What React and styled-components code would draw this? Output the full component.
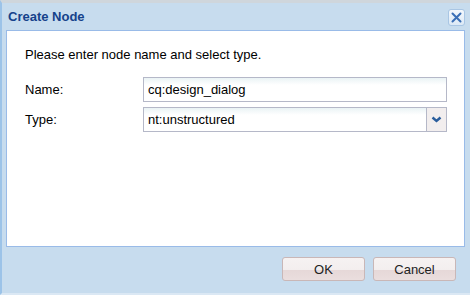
import styled, { createGlobalStyle } from 'styled-components';

const Global = createGlobalStyle`
  html, body { margin: 0; padding: 0; }
  body {
    font-family: "Liberation Sans", Arial, sans-serif;
    font-size: 13px;
    background: #fff;
  }
`;

const Window = styled.div`
  width: 470px;
  height: 295px;
  box-sizing: border-box;
  background: #c7dcee;
  border-top: 3px solid #cfd6dc;
  border-left: 2px solid #9cc3e8;
  border-bottom: 2px solid #dbe8f4;
  display: flex;
  flex-direction: column;
`;

const TitleBar = styled.div`
  height: 27px;
  display: flex;
  align-items: center;
  justify-content: space-between;
  padding: 0 5px 0 6px;
`;

const Title = styled.span`
  font-weight: bold;
  font-size: 13px;
  color: #15428b;
  margin-top: -1px;
`;

const CloseButton = styled.button`
  width: 17px;
  height: 17px;
  padding: 0;
  border: 1px solid #a9c6e4;
  border-radius: 3px;
  background: linear-gradient(#f4f8fc, #dce9f6);
  display: flex;
  align-items: center;
  justify-content: center;
  margin-top: 2px;
`;

const Body = styled.div`
  margin: 0 5px 0 4px;
  height: 217px;
  box-sizing: border-box;
  background: #fff;
  border: 1px solid #99bbe8;
  padding: 16px 17px 0 18px;
`;

const Intro = styled.p`
  margin: 0 0 15px;
  color: #000;
`;

const Row = styled.div`
  display: flex;
  align-items: center;
  margin-bottom: 5px;
`;

const Label = styled.label`
  width: 118px;
  color: #000;
`;

const Field = styled.div`
  flex: 1;
  height: 25px;
  box-sizing: border-box;
  border: 1px solid #b5b8c8;
  background: linear-gradient(#eaf3f5 0px, #fff 7px);
  display: flex;
  align-items: center;
`;

const Value = styled.span`
  flex: 1;
  padding-left: 4px;
  color: #000;
`;

const Trigger = styled.div`
  width: 19px;
  height: 100%;
  border-left: 1px solid #b5b8c8;
  background: #f2eeee;
  display: flex;
  align-items: center;
  justify-content: center;
`;

const Footer = styled.div`
  flex: 1;
  display: flex;
  justify-content: flex-end;
  align-items: flex-start;
  gap: 8px;
  padding: 10px 14px 0 0;
`;

const Button = styled.button`
  width: 83px;
  height: 24px;
  font-family: "Liberation Sans", Arial, sans-serif;
  font-size: 13px;
  color: #222;
  border: 1px solid #c9b7b7;
  border-radius: 3px;
  background: linear-gradient(#f6f2f2 0%, #f3eeee 55%, #e6d8d8 56%, #eadede 100%);
  padding: 0;
`;

export default function App() {
  return (
    <>
      <Global />
      <Window>
        <TitleBar>
          <Title>Create Node</Title>
          <CloseButton aria-label="close">
            <svg width="11" height="11" viewBox="0 0 11 11">
              <path d="M1.5 1.5 L9.5 9.5 M9.5 1.5 L1.5 9.5" stroke="#3b6fb6" strokeWidth="2" strokeLinecap="round" />
            </svg>
          </CloseButton>
        </TitleBar>
        <Body>
          <Intro>Please enter node name and select type.</Intro>
          <Row>
            <Label>Name:</Label>
            <Field>
              <Value>cq:design_dialog</Value>
            </Field>
          </Row>
          <Row>
            <Label>Type:</Label>
            <Field>
              <Value>nt:unstructured</Value>
              <Trigger>
                <svg width="11" height="7" viewBox="0 0 11 7">
                  <path d="M1.5 1.5 L5.5 5 L9.5 1.5" stroke="#2a5d9c" strokeWidth="2.4" fill="none" />
                </svg>
              </Trigger>
            </Field>
          </Row>
        </Body>
        <Footer>
          <Button>OK</Button>
          <Button>Cancel</Button>
        </Footer>
      </Window>
    </>
  );
}
